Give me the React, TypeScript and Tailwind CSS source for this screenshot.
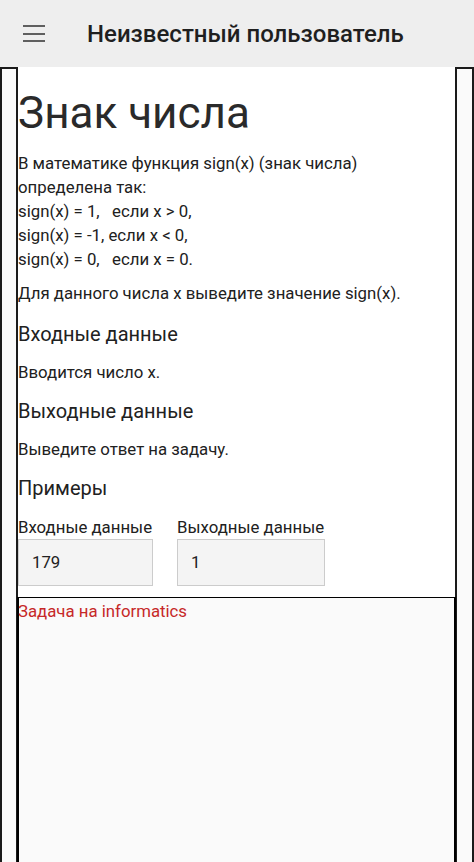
export default function App() {
  return (
    <div className="flex h-[862px] flex-col overflow-hidden bg-white font-['Roboto',_'Noto_Sans',_sans-serif] text-[#212121]">
      {/* Top bar */}
      <header className="flex h-[67px] shrink-0 items-center bg-[#eeeeee]">
        <button className="ml-[23px] flex w-[22px] flex-col gap-[5.5px]">
          <span className="h-[2px] w-full bg-[#5f5f5f]" />
          <span className="h-[2px] w-full bg-[#5f5f5f]" />
          <span className="h-[2px] w-full bg-[#5f5f5f]" />
        </button>
        <h2 className="ml-[42px] text-[24px] font-medium text-[#1f1f1f]">Неизвестный пользователь</h2>
      </header>

      <div className="flex flex-1">
        <div className="w-[18px] shrink-0 border-2 border-b-0 border-[#1a1a1a] bg-[#fafafa]" />

        <main className="flex min-w-0 flex-1 flex-col">
          <h1 className="mt-[20px] text-[44px] leading-[1.2] font-normal text-[#2a2a2a]">Знак числа</h1>
          <p className="mt-[11px] text-[16.8px] leading-[24px] whitespace-pre">
            {"В математике функция sign(x) (знак числа)\nопределена так:\nsign(x) = 1,   если x > 0,\nsign(x) = -1, если x < 0,\nsign(x) = 0,   если x = 0."}
          </p>
          <p className="mt-[10px] text-[16.8px] leading-[24px]">Для данного числа x выведите значение sign(x).</p>

          <h3 className="mt-[15px] text-[20px] leading-[28px]">Входные данные</h3>
          <p className="mt-[12px] text-[16.8px] leading-[24px]">Вводится число x.</p>

          <h3 className="mt-[13px] text-[20px] leading-[28px]">Выходные данные</h3>
          <p className="mt-[12px] text-[16.8px] leading-[24px]">Выведите ответ на задачу.</p>

          <h3 className="mt-[13px] text-[20px] leading-[28px]">Примеры</h3>

          <div className="mt-[14px] flex gap-[24px]">
            <div className="flex flex-col">
              <span className="text-[16.8px] leading-[22px]">Входные данные</span>
              <div className="mt-[1px] flex h-[47px] w-[135px] items-center border border-[#cccccc] bg-[#f4f4f4] pl-[13px] text-[16.8px]">
                179
              </div>
            </div>
            <div className="flex flex-col">
              <span className="text-[16.8px] leading-[22px]">Выходные данные</span>
              <div className="mt-[1px] flex h-[47px] w-[148px] items-center border border-[#cccccc] bg-[#f4f4f4] pl-[13px] text-[16.8px]">
                1
              </div>
            </div>
          </div>

          <div className="relative z-10 -mx-px mt-[11px] flex-1 border-x-2 border-t-[1.5px] border-black bg-[#fafafa]">
            <a className="-ml-px block pt-[2px] text-[16.8px] leading-[22px] text-[#c62828]">Задача на informatics</a>
          </div>
        </main>

        <div className="w-[19px] shrink-0 border-2 border-b-0 border-[#1a1a1a] bg-[#fafafa]" />
      </div>
    </div>
  )
}
